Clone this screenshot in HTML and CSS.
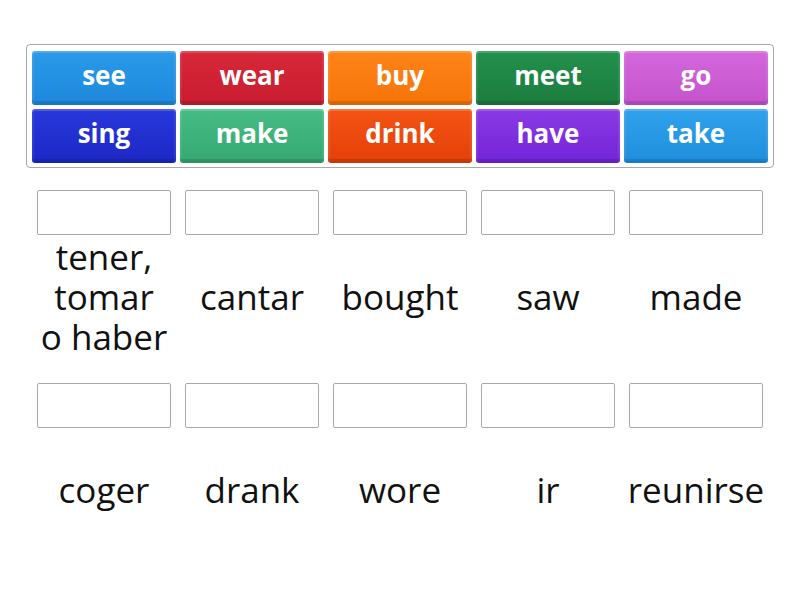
FILE: index.html
```html
<!DOCTYPE html>
<html>
<head>
<meta charset="utf-8">
<link rel="stylesheet" href="styles.css">
</head>
<body>
<div class="page">
  <div class="bank">
    <div class="tile t-see">see</div>
    <div class="tile t-wear">wear</div>
    <div class="tile t-buy">buy</div>
    <div class="tile t-meet">meet</div>
    <div class="tile t-go">go</div>
    <div class="tile t-sing">sing</div>
    <div class="tile t-make">make</div>
    <div class="tile t-drink">drink</div>
    <div class="tile t-have">have</div>
    <div class="tile t-take">take</div>
  </div>
  <div class="grid">
    <div class="cell"><div class="slot"></div><div class="label">tener,<br>tomar<br>o haber</div></div>
    <div class="cell"><div class="slot"></div><div class="label">cantar</div></div>
    <div class="cell"><div class="slot"></div><div class="label">bought</div></div>
    <div class="cell"><div class="slot"></div><div class="label">saw</div></div>
    <div class="cell"><div class="slot"></div><div class="label">made</div></div>
    <div class="cell"><div class="slot"></div><div class="label">coger</div></div>
    <div class="cell"><div class="slot"></div><div class="label">drank</div></div>
    <div class="cell"><div class="slot"></div><div class="label">wore</div></div>
    <div class="cell"><div class="slot"></div><div class="label">ir</div></div>
    <div class="cell"><div class="slot"></div><div class="label">reunirse</div></div>
  </div>
</div>
</body>
</html>
```
FILE: styles.css
```css
html, body {
  margin: 0;
  padding: 0;
  background: #fff;
}
body {
  font-family: "Open Sans", "Liberation Sans", sans-serif;
  color: #111;
}
.page {
  width: 800px;
  height: 600px;
  padding-top: 44px;
  box-sizing: border-box;
}
.bank {
  margin: 0 26px;
  border: 1px solid #a9a9a9;
  border-radius: 4px;
  padding: 6px 5px 5px 5px;
  display: grid;
  grid-template-columns: repeat(5, 144px);
  grid-auto-rows: 54px;
  column-gap: 4px;
  row-gap: 4px;
  height: 124px;
  box-sizing: border-box;
}
.tile {
  border-radius: 3px;
  color: #fff;
  font-weight: 700;
  font-size: 26px;
  display: flex;
  align-items: center;
  justify-content: center;
  padding-bottom: 7px;
  box-sizing: border-box;
  box-shadow: inset 0 -4px 0 rgba(0,0,0,0.12), inset 0 2px 0 rgba(255,255,255,0.18), inset 2px 0 0 rgba(255,255,255,0.08), inset -2px 0 0 rgba(255,255,255,0.08);
}
.t-see { background: linear-gradient(#2a9ae8, #1e88dc); }
.t-wear { background: linear-gradient(#d8283a, #c81c2e); }
.t-buy { background: linear-gradient(#ff8418, #f57408); }
.t-meet { background: linear-gradient(#24904c, #1b7c3e); }
.t-go { background: linear-gradient(#d468dc, #c452cc); }
.t-sing { background: linear-gradient(#2838dc, #1c28c4); }
.t-make { background: linear-gradient(#46bc84, #36a872); }
.t-drink { background: linear-gradient(#f45414, #e44008); }
.t-have { background: linear-gradient(#8a3ae4, #7424d8); }
.t-take { background: linear-gradient(#30a2ec, #1e8edc); }

.grid {
  margin: 22px 0 0 30px;
  display: grid;
  grid-template-columns: repeat(5, 148px);
  row-gap: 24px;
}
.cell {
  display: flex;
  flex-direction: column;
  align-items: center;
}
.slot {
  width: 134px;
  height: 45px;
  border: 1px solid #a8a8a8;
  border-radius: 2px;
  box-sizing: border-box;
}
.label {
  height: 124px;
  display: flex;
  align-items: center;
  justify-content: center;
  text-align: center;
  font-size: 35px;
  line-height: 40px;
  color: #111;
  white-space: nowrap;
}
```
